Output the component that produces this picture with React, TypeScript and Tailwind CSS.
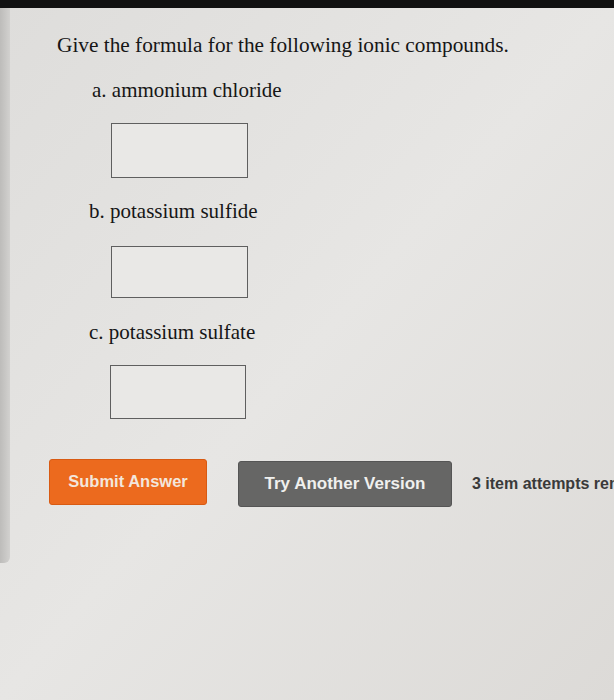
import React from 'react'

const serif = { fontFamily: '"Liberation Serif", "Times New Roman", serif' }
const sans = { fontFamily: '"Liberation Sans", Arial, sans-serif' }

function AnswerBox({ w, h }: { w: string; h: string }) {
  return <input type="text" className={`block ${h} ${w} border border-[#5f5f5f] bg-[#e9e8e6] outline-none`} />
}

export default function App() {
  const items = [
    { label: 'a. ammonium chloride', indent: 'pl-[35px]', box: 'ml-[19px] mt-[21px]', w: 'w-[137px]', h: 'h-[55px]', top: 'mt-[18px]' },
    { label: 'b. potassium sulfide', indent: 'pl-[32px]', box: 'ml-[22px] mt-[23px]', w: 'w-[137px]', h: 'h-[52px]', top: 'mt-[21px]' },
    { label: 'c. potassium sulfate', indent: 'pl-[32px]', box: 'ml-[21px] mt-[21px]', w: 'w-[136px]', h: 'h-[54px]', top: 'mt-[22px]' },
  ]
  return (
    <div className="w-[614px] h-[700px] overflow-hidden flex flex-col bg-[#1a1a1a]">
      <div className="h-[8px] shrink-0 bg-[#111]" />
      <div className="flex flex-1 bg-gradient-to-br from-[#dedddb] via-[#e7e6e4] to-[#dcdad7]">
        <div className="w-[10px] h-[555px] shrink-0 rounded-br-md bg-gradient-to-r from-[#bdbcba] to-[#d2d1cf]" />
        <div className="flex-1 pl-[47px] pt-[22px] text-[#161616]" style={serif}>
          <h1 className="text-[21.3px] leading-[30px]">Give the formula for the following ionic compounds.</h1>
          <div className="flex flex-col">
            {items.map((it) => (
              <div key={it.label} className={`${it.indent} ${it.top}`}>
                <div className="text-[21px] leading-[24px]">{it.label}</div>
                <div className={it.box}>
                  <AnswerBox w={it.w} h={it.h} />
                </div>
              </div>
            ))}
          </div>
          <div className="flex items-center mt-[37px] -ml-[8px]" style={sans}>
            <button className="w-[158px] h-[46px] rounded-[3px] bg-[#ec6a1e] border border-[#d85a12] text-[#f3e6dc] font-bold text-[16.5px]">
              Submit Answer
            </button>
            <button className="ml-[31px] mt-[5px] w-[214px] h-[46px] rounded-[3px] bg-[#666665] border border-[#555] text-[#f0f0ee] font-bold text-[17px]">
              Try Another Version
            </button>
            <span className="ml-[20px] mt-[5px] whitespace-nowrap font-bold text-[16px] text-[#3a3a3a]">3 item attempts remaining</span>
          </div>
        </div>
      </div>
    </div>
  )
}
